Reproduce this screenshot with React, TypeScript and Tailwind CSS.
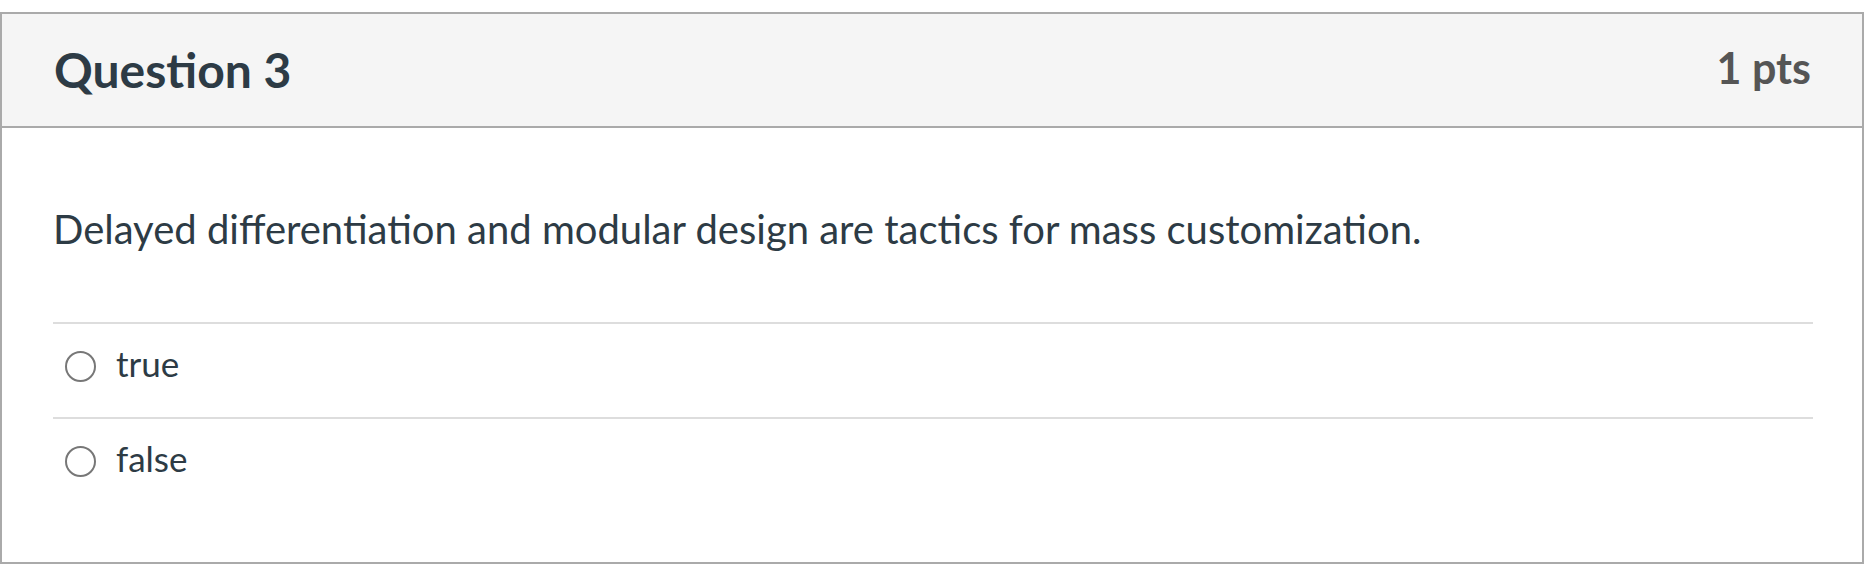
import React from 'react';

const options = ['true', 'false'];

const Radio = () => (
    <span className="mt-[9px] box-border block h-[31px] w-[31px] shrink-0 rounded-full border-2 border-[#777777] bg-white" />
);

export default function App() {
    return (
        <div className="min-h-[567px] bg-white pt-3 pr-[11px] font-['Lato','Liberation_Sans',sans-serif]">
            <div className="h-[552px] border-2 border-[#aaaaaa]">
                <div className="flex h-[114px] items-start justify-between border-b-2 border-[#aaaaaa] bg-[#f5f5f5] pr-[51px] pl-[52px]">
                    <h2 className="mt-[27px] text-[48px] leading-[58px] font-bold text-[#2d3b45]">Question 3</h2>
                    <span className="mt-[28px] text-[43px] leading-[52px] font-bold text-[#555555]">1 pts</span>
                </div>
                <div className="pr-[49px] pl-[51px]">
                    <p className="pt-[77px] pb-[69px] text-[40px] leading-[48px] text-[#2d3b45]">
                        Delayed differentiation and modular design are tactics for mass customization.
                    </p>
                    {options.map((opt) => (
                        <label
                            key={opt}
                            className="flex h-[95px] items-start gap-[20px] border-t-2 border-[#dddddd] pt-[18px] pl-[12px]"
                        >
                            <Radio />
                            <span className="text-[35px] leading-[42px] text-[#2d3b45]">{opt}</span>
                        </label>
                    ))}
                </div>
            </div>
        </div>
    );
}
